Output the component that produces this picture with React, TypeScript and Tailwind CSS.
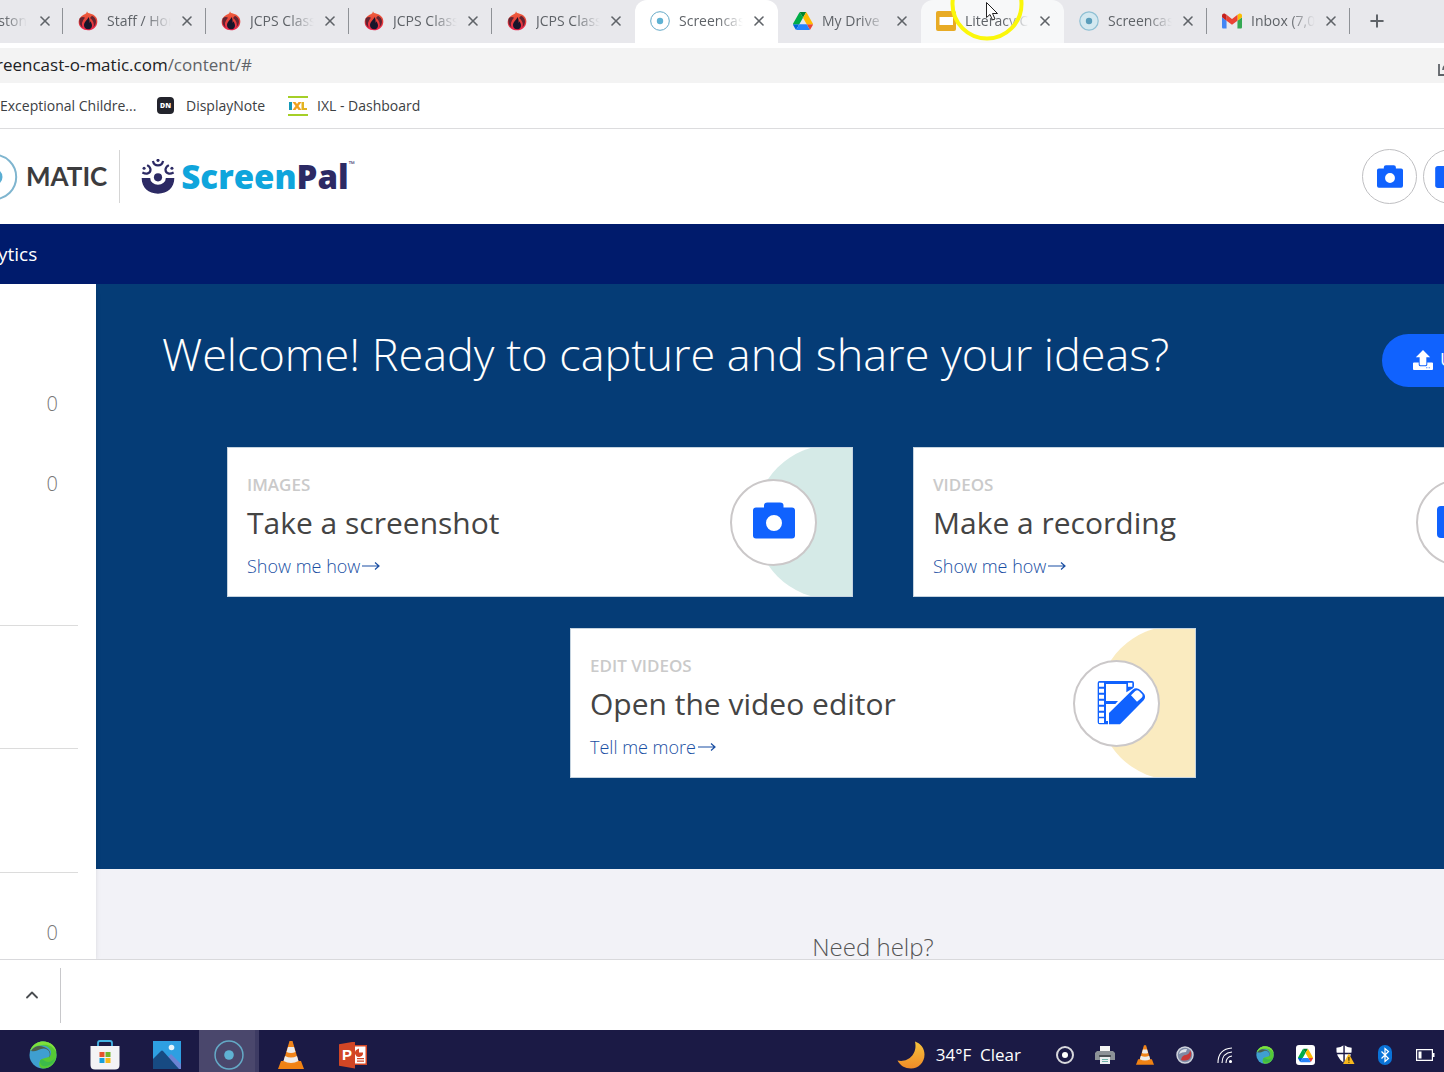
import type { ReactNode } from 'react';
import { ChevronUp, Plus, X } from 'lucide-react';

type IconProps = { className?: string };

function FlameIcon({ className }: IconProps) {
  return (
    <svg viewBox="0 0 60 60" className={className}>
      <defs>
        <linearGradient id="flame" x1="0" y1="0" x2="0" y2="1">
          <stop offset="0" stopColor="#f0643c" />
          <stop offset=".5" stopColor="#e8403a" />
          <stop offset="1" stopColor="#e8234e" />
        </linearGradient>
      </defs>
      <path d="M27 1c1 5 5 6 11 7 12 3 21 12 20 25-1 15-13 25-28 25S2 48 2 34C2 22 11 14 20 10c4-2 6-4 7-9z" fill="url(#flame)" />
      <path d="M5 22q9-7 16-2-6 6-9 16-1 8 2 14Q1 40 5 22zM42 14q13 6 12 20-1 10-8 15 3-8 0-15-3-9-10-13z" fill="#3a1a30" opacity=".75" />
      <path d="M31 18c-1 8-13 14-13 25 0 8 6 12 12 12s12-4 12-11c0-6-3-8-4-13-2 2-2 4-3 5 0-7 0-13-4-18z" fill="#17152b" />
    </svg>
  );
}

function TargetIcon({ className }: IconProps) {
  return (
    <svg viewBox="0 0 20 20" className={className}>
      <circle cx="10" cy="10" r="9.3" fill="none" stroke="#64a9c6" strokeWidth="1" />
      <circle cx="10" cy="10" r="3.2" fill="#5fb2d3" />
    </svg>
  );
}

function TintedTargetIcon({ className }: IconProps) {
  return (
    <svg viewBox="0 0 20 20" className={className}>
      <circle cx="10" cy="10" r="9.2" fill="#d3e8f0" stroke="#8fc0d4" strokeWidth="1.2" />
      <circle cx="10" cy="10" r="3.2" fill="#5a9dbb" />
    </svg>
  );
}

function DriveIcon({ className }: IconProps) {
  return (
    <svg viewBox="0 0 87.3 78" className={className}>
      <path d="m6.6 66.85 3.85 6.65c.8 1.4 1.95 2.5 3.3 3.3l13.75-23.8h-27.5c0 1.55.4 3.1 1.2 4.5z" fill="#0066da" />
      <path d="m43.65 25-13.75-23.8c-1.35.8-2.5 1.9-3.3 3.3l-25.4 44a9.06 9.06 0 0 0-1.2 4.5h27.5z" fill="#00ac47" />
      <path d="m73.55 76.8c1.35-.8 2.5-1.9 3.3-3.3l1.6-2.75 7.65-13.25c.8-1.4 1.2-2.95 1.2-4.5h-27.5l5.85 11.5z" fill="#ea4335" />
      <path d="m43.65 25 13.75-23.8c-1.35-.8-2.9-1.2-4.5-1.2h-18.5c-1.6 0-3.15.45-4.5 1.2z" fill="#00832d" />
      <path d="m59.8 53h-32.3l-13.75 23.8c1.35.8 2.9 1.2 4.5 1.2h50.8c1.6 0 3.15-.45 4.5-1.2z" fill="#2684fc" />
      <path d="m73.4 26.5-12.7-22c-.8-1.4-1.95-2.5-3.3-3.3l-13.75 23.8 16.15 28h27.45c0-1.55-.4-3.1-1.2-4.5z" fill="#ffba00" />
    </svg>
  );
}

function SlidesIcon({ className }: IconProps) {
  return (
    <svg viewBox="0 0 20 20" className={className}>
      <rect width="20" height="20" rx="2" fill="#e8ab25" />
      <rect x="3.5" y="6" width="13.5" height="8" fill="#fff" />
    </svg>
  );
}

function GmailIcon({ className }: IconProps) {
  return (
    <svg viewBox="52 42 88 66" className={className}>
      <path fill="#4285f4" d="M58 108h14V74L52 59v43c0 3.32 2.69 6 6 6" />
      <path fill="#34a853" d="M120 108h14c3.32 0 6-2.69 6-6V59l-20 15" />
      <path fill="#fbbc04" d="M120 48v26l20-15v-8c0-7.42-8.47-11.65-14.4-7.2" />
      <path fill="#ea4335" d="M72 74V48l24 18 24-18v26L96 92" />
      <path fill="#c5221f" d="M52 51v8l20 15V48l-5.600-4.200c-5.940-4.450-14.400-.22-14.400 7.200" />
    </svg>
  );
}

function IxlIcon() {
  return (
    <svg viewBox="0 0 20 20" className="size-5 shrink-0">
      <path d="M0 0h20v2H0zM0 18h20v2H0z" fill="#a5cf27" />
      <path d="M1 6h3v8H1z" fill="#1599b8" />
      <path d="M4.500 6h3l1.500 2 1.500-2h3l-3 4 3 4h-3l-1.500-2-1.500 2h-3l3-4z" fill="#f0a01e" />
      <path d="M13.500 6h2.500v6h3v2h-5.500z" fill="#e3b321" />
    </svg>
  );
}

function CameraIcon({ className }: IconProps) {
  return (
    <svg viewBox="0 0 42 37" className={className}>
      <path
        fillRule="evenodd"
        d="M3 5.500h8V3.500Q11 .5 14.500.5h12.500Q30.500.5 30.500 3.500v2H39q3 0 3 3V33.500q0 3-3 3H3q-3 0-3-3V8.500q0-3 3-3zM21 13a8 8 0 1 0 0 16 8 8 0 0 0 0-16z"
        fill="#1062fe"
      />
    </svg>
  );
}

function VideoIcon({ className }: IconProps) {
  return (
    <svg viewBox="0 0 46 32" className={className}>
      <rect width="31" height="32" rx="4" fill="#1062fe" />
      <path d="M33 12 43 4q3-2 3 1v22q0 3-3 1l-10-8z" fill="#1062fe" />
    </svg>
  );
}

function EditorIcon({ className }: IconProps) {
  return (
    <svg viewBox="174 176 147 135" className={className}>
      <path fillRule="evenodd" fill="#1062fe" d="M182 179H279q6 0 6 6V194q0 4-3 7L262 213V188H201V239H237L229 248H201V299H207V309H182q-6 0-6-6V185q0-6 6-6zM180 184V196H195V184zM180 202V214H195V202zM180 220V232H195V220zM180 238V250H195V238zM180 256V268H195V256zM180 274V286H195V274zM180 291V305H195V291zM267 184V196H280V184z" />
      <path fillRule="evenodd" fill="#1062fe" d="M210 275 281 205q11-9 23 1l9 9q10 10 1 22L243 309H210zM276 222 294 241 308 229q5-5 1-11l-9-9q-6-4-11 0z" />
    </svg>
  );
}

function UploadIcon() {
  return (
    <svg viewBox="0 0 21 21" className="size-5 shrink-0">
      <path d="M10.500 0 18 7.500h-4V15q0 1-1 1H8q-1 0-1-1V7.500H3z" fill="#fff" />
      <path fillRule="evenodd" d="M1 13h5v2.500Q6 17 7.500 17h6q1.500 0 1.500-1.500V13h5q1 0 1 1v6q0 1-1 1H1q-1 0-1-1v-6q0-1 1-1zM14 18v1.200h1V18zm2.500 0v1.200h1V18z" fill="#fff" />
    </svg>
  );
}

function ScreenPalMark() {
  return (
    <svg viewBox="422 89 100 103" className="h-[35px] w-[34px] shrink-0">
      <path d="M424 145h25a23 20 0 0 0 46 0h25c0 28-20 46-48 46s-48-18-48-46z" fill="#2c2a64" />
      <circle cx="472" cy="143" r="12" fill="#2c2a64" />
      <g fill="none" stroke="#2c2a64" strokeWidth="6.500">
        <path d="M457 95q3 13 15 13t15-13" />
        <path d="M440 107q10 5 10 14t-10 11q-6 1-14-3" />
        <path d="M504 107q-10 5-10 14t10 11q6 1 14-3" />
      </g>
      <g fill="#2c2a64">
        <circle cx="472" cy="93" r="4.500" />
        <circle cx="431" cy="116" r="4.500" />
        <circle cx="513" cy="116" r="4.500" />
      </g>
    </svg>
  );
}

function EdgeIcon({ className }: IconProps) {
  return (
    <svg viewBox="0 0 28 28" className={className}>
      <circle cx="14" cy="14" r="13.500" fill="#3f9fd0" />
      <path d="M1 10C3 4 8 .5 14 .5c8 0 13.500 6 13.500 13.500S22 27.500 14 27.500c-4 0-5-6-2-9 3-2 8-1 10-5 1-5-3-9-9-9C7 4.500 3 7 1 10z" fill="#55c935" />
      <path d="M2 10c3-5 8-6 13-4 6 2 8 7 5 11 3-7-3-11-8-9-4 1-5 3-10 2z" fill="#4d5f4a" />
      <path d="M1 10C4 3 9 .5 14 .5c8 0 13 5 13.500 11C24 5 19 3 13 4 8 4 4 6 1 10z" fill="#7ee03c" />
      <path d="M11 20c0 4 3 6 7 5 4-1 7-4 8-8-3 4-7 5-10 3-2-2-4-2-5 0z" fill="#3dbb4a" />
    </svg>
  );
}

function StoreIcon() {
  return (
    <svg viewBox="0 0 30 30" className="size-[30px]">
      <path d="M8 6V3q0-2 2-2h10q2 0 2 2v3" fill="none" stroke="#43b4e4" strokeWidth="1.800" />
      <path d="M.5 6h29v19q0 4.500-4.500 4.500H5Q.5 29.500.5 25z" fill="#f3f3f5" />
      <path d="M9.500 12h5v5h-5z" fill="#e5532d" />
      <path d="M15.500 12h5v5h-5z" fill="#72b52c" />
      <path d="M9.500 18h5v5h-5z" fill="#16a0dc" />
      <path d="M15.500 18h5v5h-5z" fill="#f6b91b" />
    </svg>
  );
}

function PhotosIcon() {
  return (
    <svg viewBox="0 0 28 28" className="size-7">
      <path d="M0 0h28v28H0z" fill="#2e9fe2" />
      <path d="m14 17 4-4 10 10v5H14z" fill="#6b83d4" />
      <path d="m0 18 8-8q1-1 2 0l16 18H0z" fill="#174a82" />
      <circle cx="18.500" cy="6.500" r="2.800" fill="#e6f4fb" />
    </svg>
  );
}

function ConeIcon({ className }: IconProps) {
  return (
    <svg viewBox="0 0 26 28" className={className}>
      <path d="M3 20h20l3 8H0z" fill="#f08213" />
      <path d="M11.500 0h3L21 22q-8 4-16 0z" fill="#f0841a" />
      <path d="M10 6h6l1.500 5q-4.500 2-9 0zM7 15q6 3 12 0l1.500 5q-7.500 4-15 0z" fill="#ececec" />
    </svg>
  );
}

function PowerPointIcon() {
  return (
    <div className="flex h-7 w-7 items-center">
      <div className="flex h-[27px] w-4 items-center justify-center bg-[#d24625] font-['Liberation_Sans'] text-[15px] font-bold text-white [clip-path:polygon(0_10%,100%_0,100%_100%,0_90%)]">P</div>
      <svg viewBox="0 0 12 20" className="h-5 w-3">
        <path d="M0 0h12v20H0z" fill="#d24625" />
        <path d="M0 1.500h10.500v17H0z" fill="#fff" />
        <path d="M4 3.500v4h4a4 4 0 1 1-6-3zM2 13h7v1.200H2zM2 15.500h7v1.200H2z" fill="#d24625" />
      </svg>
    </div>
  );
}

function MoonIcon() {
  return (
    <svg viewBox="0 0 28 28" className="size-7 shrink-0">
      <defs>
        <linearGradient id="moon" x1="0" y1="0" x2="0" y2="1">
          <stop offset="0" stopColor="#f5c33c" />
          <stop offset="1" stopColor="#f08b28" />
        </linearGradient>
      </defs>
      <path d="M18 .5c6 2 9.500 7 9.500 13 0 8-6 14-13.500 14-6 0-11-3-13.500-8C10 22 21 14 18 .5z" fill="url(#moon)" />
    </svg>
  );
}

function Tab({ title, icon, state = 'idle', divider = true }: {
  title: string;
  icon: ReactNode;
  state?: 'idle' | 'active' | 'hover';
  divider?: boolean;
}) {
  const background = { idle: '', active: 'rounded-t-xl bg-white', hover: 'rounded-t-xl bg-[#f7f8f9]' }[state];
  return (
    <div className={`flex w-[143px] shrink-0 items-center pb-px ${background}`}>
      <a href="#" className="flex flex-1 items-center gap-[9px] pl-[15px]">
        {icon}
        <span className="w-16 overflow-hidden whitespace-nowrap mask-r-from-60%">{title}</span>
      </a>
      <button aria-label={`Close ${title}`} className="flex size-5 items-center justify-center">
        <X size={16} strokeWidth={2.4} />
      </button>
      <span className={`ml-2 h-[26px] w-px ${divider ? 'bg-[#8e9196]' : ''}`} />
    </div>
  );
}

function ActionCard({ label, title, link, tint, icon }: {
  label: string;
  title: string;
  link: string;
  tint: string;
  icon: ReactNode;
}) {
  return (
    <article className="relative flex w-[626px] shrink-0 items-center justify-between overflow-hidden border border-[#c5d3df] bg-white pr-[35px] pl-[19px]">
      <div className={`absolute -right-[57px] size-[154px] rounded-full ${tint}`} />
      <div className="pt-[23px] pb-4">
        <p className="text-[17px] leading-7 font-semibold text-[#cacaca]">{label}</p>
        <h2 className="text-[30px] leading-[48px] text-[#444]">{title}</h2>
        <a href="#" className="mt-[5px] flex items-center gap-[2px] text-[18px] leading-7 font-light text-[#1a4fa3]">
          {link}
          <svg viewBox="0 0 18 10" className="h-[10px] w-[18px]" fill="none" stroke="currentColor" strokeWidth="1.200">
            <path d="M0 5h17M13 1.500 17 5l-4 3.500" />
          </svg>
        </a>
      </div>
      <button aria-label={title} className="relative flex size-[87px] items-center justify-center rounded-full border-2 border-[#cbc8c9] bg-white">
        {icon}
      </button>
    </article>
  );
}

function Browser() {
  return (
    <header className="relative shrink-0 font-['Open_Sans',sans-serif] text-sm">
      <nav className="flex h-[43px] overflow-hidden bg-[#e8e8ec] text-[#5f6368]">
        <div className="flex w-[63px] shrink-0 items-center justify-end pb-px">
          <a href="#" className="mr-[10px] whitespace-nowrap mask-r-from-60%">Houston</a>
          <button aria-label="Close Houston" className="flex size-5 items-center justify-center">
            <X size={16} strokeWidth={2.4} />
          </button>
          <span className="ml-[9px] h-[26px] w-px shrink-0 bg-[#8e9196]" />
        </div>
        <Tab title="Staff / Homepage" icon={<FlameIcon className="size-5 shrink-0" />} />
        <Tab title="JCPS Classlink" icon={<FlameIcon className="size-5 shrink-0" />} />
        <Tab title="JCPS Classlink" icon={<FlameIcon className="size-5 shrink-0" />} />
        <Tab title="JCPS Classlink" icon={<FlameIcon className="size-5 shrink-0" />} divider={false} />
        <Tab title="Screencast" icon={<TargetIcon className="size-5 shrink-0" />} state="active" divider={false} />
        <Tab title="My Drive" icon={<DriveIcon className="size-5 shrink-0" />} divider={false} />
        <Tab title="Literacy Center" icon={<SlidesIcon className="size-5 shrink-0" />} state="hover" divider={false} />
        <Tab title="Screencast" icon={<TintedTargetIcon className="size-5 shrink-0" />} />
        <Tab title="Inbox (7,012)" icon={<GmailIcon className="size-5 shrink-0" />} />
        <button aria-label="New tab" className="flex w-[54px] shrink-0 items-center justify-center pb-px">
          <Plus size={20} strokeWidth={2.4} />
        </button>
      </nav>

      {/* Address bar */}
      <div className="overflow-hidden bg-white pt-[5px]">
        <div className="-mr-3 -ml-1 flex h-[35px] items-center justify-between bg-[#f3f3f3]">
          <p className="text-[17px] text-[#5f6368]"><span className="text-[#202124]">reencast-o-matic.com</span>/content/#</p>
          <svg viewBox="0 0 18 18" className="mt-1 size-[18px]" fill="none" stroke="#5f6368" strokeWidth="1.800">
            <path d="M1 5v11h13M5 11q0-6 8-6M10 1l4 4-4 4" />
          </svg>
        </div>
      </div>

      {/* Bookmarks */}
      <nav className="flex h-[46px] items-center border-b border-[#dcdcde] bg-white text-sm whitespace-nowrap text-[#3c4043]">
        <a href="#" className="w-[157px]">Exceptional Childre...</a>
        <a href="#" className="flex w-[131px] items-center gap-3">
          <span className="flex size-[17px] items-center justify-center rounded-[4px] bg-[#23242c] text-[7px] font-extrabold text-white">DN</span>
          DisplayNote
        </a>
        <a href="#" className="flex items-center gap-[9px]"><IxlIcon />IXL - Dashboard</a>
      </nav>

      {/* Pointer with its highlight ring */}
      <div className="pointer-events-none absolute inset-x-0 top-0 h-[43px] overflow-hidden">
        <svg viewBox="0 0 76 44" className="absolute top-0 left-[949px] h-11 w-[76px]">
          <circle cx="38" cy="4" r="34.500" fill="none" stroke="#fbf70a" strokeWidth="4" />
          <path d="M37.500 2.500v15l3.500-3 2.500 5.500 2.500-1-2.500-5.500h5z" fill="#fff" stroke="#222" strokeWidth="1" />
        </svg>
      </div>
    </header>
  );
}

function SiteHeader() {
  return (
    <header className="shrink-0 overflow-hidden">
      <div className="-mr-[34px] flex h-[95px] items-center justify-between bg-white">
        <div className="flex items-center">
          <svg viewBox="-28 -24 46 48" className="-ml-7 h-12 w-[46px] shrink-0">
            <circle r="22.200" cx="-6" fill="none" stroke="#7fb5cf" strokeWidth="2" />
            <circle r="8.500" cx="-6" fill="#5aaed3" />
          </svg>
          <span className="ml-2 font-['Lato'] text-[26px] font-bold text-[#3c3c3e]">MATIC</span>
          <span className="mr-[13px] ml-3 h-[53px] w-px bg-[#d5d5d5]" />
          <div className="ml-2 flex items-center gap-[6px]">
            <ScreenPalMark />
            <span className="text-[33px] leading-10 font-extrabold text-[#0fa5dc]">Screen<span className="text-[#2c2a64]">Pal</span></span>
            <span className="-ml-[6px] self-start pt-px text-[8px] text-[#2c2a64]">™</span>
          </div>
        </div>
        <div className="flex gap-[6px]">
          <button aria-label="Screenshot" className="flex size-[55px] items-center justify-center rounded-full border border-[#bfbfc2]">
            <CameraIcon className="h-[23px] w-[26px]" />
          </button>
          <button aria-label="Record" className="flex size-[55px] items-center justify-center rounded-full border border-[#bfbfc2]">
            <VideoIcon className="h-[22px] w-8" />
          </button>
        </div>
      </div>
      <nav className="flex h-[60px] items-center justify-start bg-[#001b6c] text-[19px] text-white">
        <a href="#" className="-ml-[41px]">Analytics</a>
      </nav>
    </header>
  );
}

function Sidebar() {
  return (
    <aside className="relative z-10 w-24 shrink-0 bg-white pr-[18px] text-right text-[20px] font-light text-[#777] shadow-md">
      <div className="h-[342px] border-b border-[#dcdcdc] pt-[100px] pr-5">
        <p className="h-20 leading-10">0</p>
        <p className="leading-10">0</p>
      </div>
      <div className="h-[123px] border-b border-[#dcdcdc]" />
      <div className="h-[124px] border-b border-[#dcdcdc]" />
      <p className="pt-10 pr-5 leading-10">0</p>
    </aside>
  );
}

function Taskbar() {
  const tray = [
    <svg key="rec" viewBox="0 0 20 20" className="size-5"><circle cx="10" cy="10" r="8" fill="none" stroke="#d8d8dc" strokeWidth="2" /><circle cx="10" cy="10" r="3" fill="#fff" /></svg>,
    <svg key="print" viewBox="0 0 20 20" className="size-5">
      <path d="M5 1h10v5H5z" fill="#f3f3f3" />
      <path d="M2 6h16l2 2v7H0V8z" fill="#8d9298" />
      <path d="M4 10h12v2H4z" fill="#4c5157" />
      <path d="M5 12h10v7H5z" fill="#e9edef" />
      <path d="M7 14h6v1H7zM7 16h6v1H7z" fill="#6fb3ab" />
    </svg>,
    <ConeIcon key="cone" className="h-5 w-[18px]" />,
    <svg key="sync" viewBox="0 0 18 18" className="size-[18px]"><circle cx="9" cy="9" r="8" fill="#7d8aa6" stroke="#cfd3dc" strokeWidth="1.500" /><path d="M14 4q0 4-4 5-4 0-5 5 8 2 10-4 1-3-1-6z" fill="#c93a3a" /><path d="M3 8q1-5 8-5l-1 3q-4 0-7 2z" fill="#dfe3ea" /></svg>,
    <svg key="wifi" viewBox="0 0 18 18" className="size-[18px]" fill="none" stroke="#fff" strokeWidth="1.100"><path d="M2 17Q2 3 16 2M6 17Q6 7 16 6M10 17q0-6 6-7" /><circle cx="14.500" cy="15.500" r="1" fill="#fff" /></svg>,
    <EdgeIcon key="edge" className="size-[18px]" />,
    <span key="drive" className="flex h-5 w-[19px] items-center justify-center rounded-[3px] bg-white"><DriveIcon className="size-[15px]" /></span>,
    <svg key="shield" viewBox="0 0 20 21" className="size-5"><path d="M9 0q4 3 8 3 1 10-8 16Q0 13 1 3q4 0 8-3z" fill="#fff" /><path d="M9 0v19M0 9h17" stroke="#1b1a45" strokeWidth="1.500" /><path d="m14 9 6 11H8z" fill="#f7b81c" /><path d="M13.500 12.500h1.200v4h-1.200zm0 5h1.200v1.200h-1.200z" fill="#3a2c00" /></svg>,
    <svg key="bt" viewBox="0 0 14 20" className="h-5 w-[14px]"><rect width="14" height="20" rx="7" fill="#0a73d8" /><path d="m3.500 6.500 7 7L7 16.500v-13l3.500 3-7 7" fill="none" stroke="#fff" strokeWidth="1.200" /></svg>,
    <svg key="battery" viewBox="0 0 19 12" className="h-3 w-[19px]"><path d="M.6.6h15.800v10.800H.6z" fill="none" stroke="#fff" strokeWidth="1.200" /><path d="M2.500 2.500h3v7h-3zM17 4h1.500v4H17z" fill="#fff" /></svg>,
  ];

  return (
    <footer className="flex h-[42px] shrink-0 justify-between overflow-hidden bg-[#1b1a45]">
      <div className="flex gap-[2px] pl-[13px]">
        <button aria-label="Edge" className="flex w-[60px] items-center justify-center pt-2"><EdgeIcon className="size-7" /></button>
        <button aria-label="Store" className="flex w-[60px] items-center justify-center pt-2"><StoreIcon /></button>
        <button aria-label="Photos" className="flex w-[60px] items-center justify-center pt-2"><PhotosIcon /></button>
        <button aria-label="Recorder" className="flex w-[60px] items-center justify-center border-r-4 border-[#3d3b63] bg-[#4a476c] pt-2 pl-1">
          <TargetIcon className="size-[30px]" />
        </button>
        <button aria-label="VLC" className="flex w-[60px] items-center justify-center pt-2"><ConeIcon className="h-7 w-[26px]" /></button>
        <button aria-label="PowerPoint" className="flex w-[60px] items-center justify-center pt-2"><PowerPointIcon /></button>
      </div>
      <div className="-mr-px flex items-center pt-2">
        <MoonIcon />
        <p className="mr-6 ml-[11px] text-[17px] leading-6 whitespace-pre text-white">34°F  Clear</p>
        {tray.map((icon, i) => (
          <span key={i} className="flex w-10 items-center justify-center">{icon}</span>
        ))}
      </div>
    </footer>
  );
}

export default function App() {
  return (
    <div className="flex h-screen flex-col overflow-hidden bg-white font-['Open_Sans',sans-serif]">
      <Browser />
      <SiteHeader />

      <div className="flex min-h-0 flex-1 overflow-hidden">
        <Sidebar />
        <main className="min-w-0 flex-1 overflow-hidden bg-[#f2f2f7]">
          <section className="h-[585px] w-[1574px] bg-[#053c76] px-[66px] pt-[45px]">
            <div className="flex items-start justify-between">
              <h1 className="text-[45px] leading-[50px] font-light text-white">Welcome! Ready to capture and share your ideas?</h1>
              <button className="mt-[5px] flex h-[53px] w-[222px] items-center gap-[7px] rounded-full bg-[#1062fe] pb-[2px] pl-[31px] text-[18px] text-white">
                <UploadIcon />
                Upload
              </button>
            </div>
            <div className="flex flex-wrap justify-center gap-x-[60px] gap-y-[31px] pt-[60px]">
              <ActionCard label="IMAGES" title="Take a screenshot" link="Show me how" tint="bg-[#d5eae7]" icon={<CameraIcon className="mb-1 h-[37px] w-[42px]" />} />
              <ActionCard label="VIDEOS" title="Make a recording" link="Show me how" tint="bg-[#d5eae7]" icon={<VideoIcon className="h-8 w-[46px]" />} />
              <ActionCard label="EDIT VIDEOS" title="Open the video editor" link="Tell me more" tint="bg-[#faebc0]" icon={<EditorIcon className="mb-[2px] ml-[10px] h-[45px] w-[49px]" />} />
            </div>
          </section>
          <p className="w-[1554px] pt-[60px] text-center text-2xl leading-9 font-light text-[#555]">Need help?</p>
        </main>
      </div>

      {/* Downloads shelf */}
      <div className="flex h-[71px] shrink-0 items-center border-t border-[#d9d9dc] bg-white">
        <button aria-label="Show downloads" className="flex h-[55px] w-[61px] items-center justify-center border-r border-[#c8c8cb] pl-1 text-[#4a4d51]">
          <ChevronUp size={20} strokeWidth={2.2} />
        </button>
      </div>
      <Taskbar />
    </div>
  );
}
